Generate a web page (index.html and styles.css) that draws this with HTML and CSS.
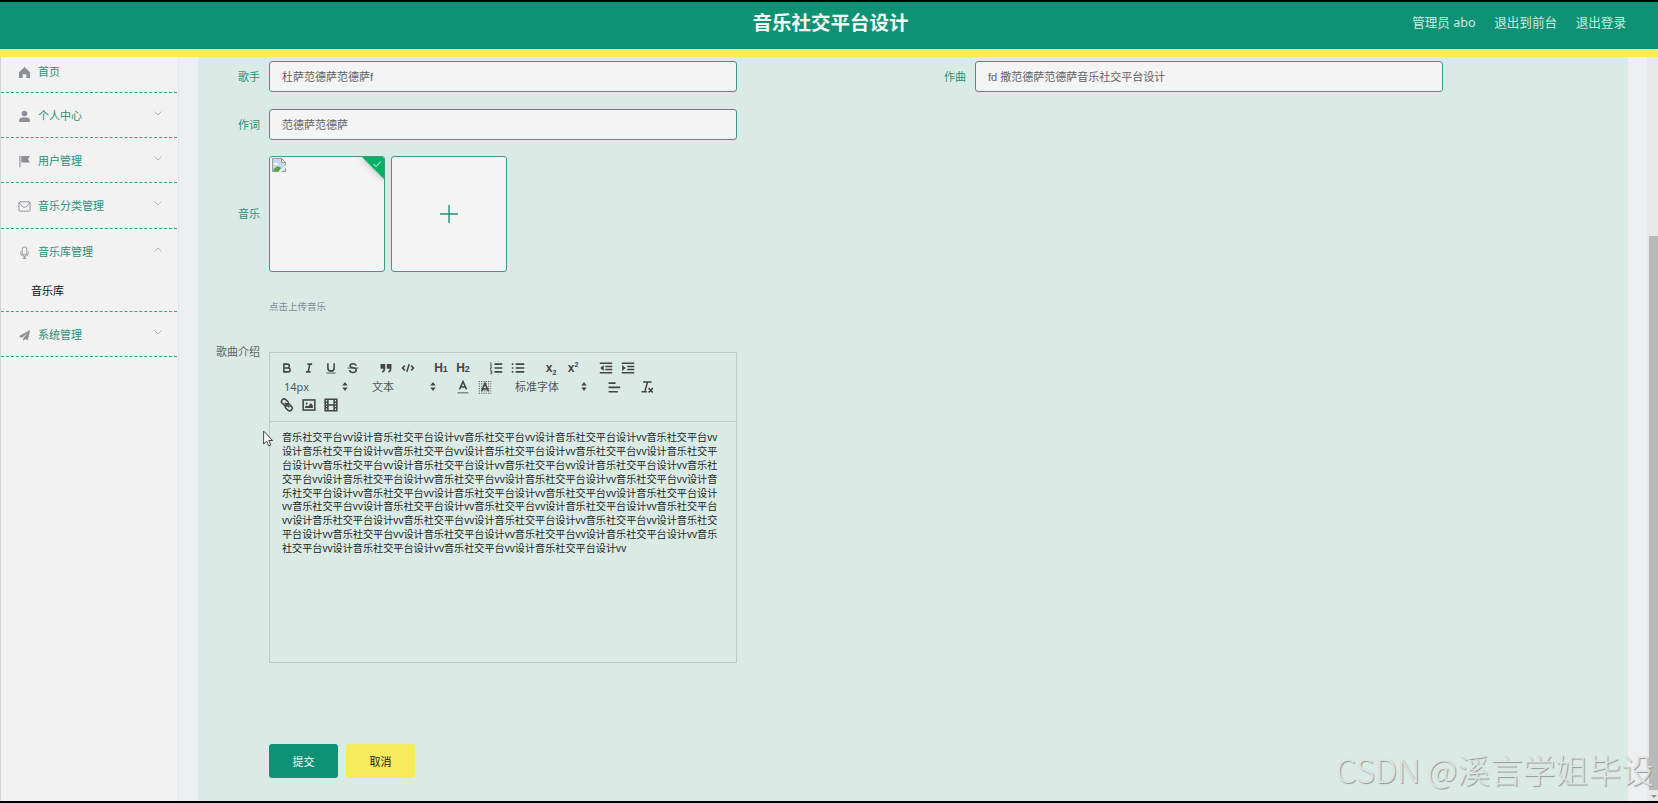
FILE: index.html
```html
<!DOCTYPE html>
<html lang="zh-CN">
<head>
    <meta charset="UTF-8">
    <meta name="viewport" content="width=device-width, initial-scale=1.0">
    <title>音乐社交平台设计</title>
    <link rel="stylesheet" href="styles.css">
</head>
<body>
    <header class="navbar">
        <h1 class="title">音乐社交平台设计</h1>
        <nav class="right-menu">
            <span>管理员 abo</span>
            <span>退出到前台</span>
            <span>退出登录</span>
        </nav>
    </header>

    <div class="container">
        <aside class="sidebar">
            <div class="menu-item first">
                <svg class="menu-icon" viewBox="0 0 14 14"><path fill="#8c9095" d="M7 1 1 6.800V13h4V8.800h4V13h4V6.800z"/></svg>
                <span>首页</span>
            </div>
            <div class="menu-item">
                <svg class="menu-icon" viewBox="0 0 14 14"><circle cx="7" cy="3.900" r="3" fill="#8c9095"/><path fill="#8c9095" d="M1.200 13v-1.600C1.200 9.400 2.600 8.200 4.500 8.200h5c1.900 0 3.300 1.200 3.300 3.200V13z"/></svg>
                <span>个人中心</span>
                <svg class="arrow" viewBox="0 0 8 5"><path d="M.5.5 4 4 7.500.5"/></svg>
            </div>
            <div class="menu-item">
                <svg class="menu-icon" viewBox="0 0 14 14"><path fill="#8c9095" d="M1.500.8h1.200v12.400H1.500zM3.500 1.200h9.300L10.800 4.700l2 3.500H3.500z"/></svg>
                <span>用户管理</span>
                <svg class="arrow" viewBox="0 0 8 5"><path d="M.5.5 4 4 7.500.5"/></svg>
            </div>
            <div class="menu-item">
                <svg class="menu-icon line" viewBox="0 0 14 14"><rect x="1" y="2" width="12" height="10" rx="1"/><path d="M1.500 2.500C3 6 5 7.800 7 7.800S11 6 12.500 2.500"/></svg>
                <span>音乐分类管理</span>
                <svg class="arrow" viewBox="0 0 8 5"><path d="M.5.5 4 4 7.500.5"/></svg>
            </div>
            <div class="menu-group">
                <div class="menu-item open">
                    <svg class="menu-icon line" viewBox="0 0 14 14"><rect x="4.500" y="1" width="5" height="8.500" rx="2.500"/><path d="M2.800 6v1.200a4.200 4 0 0 0 8.400 0V6M7 11.200v2M5 13.300h4"/></svg>
                    <span>音乐库管理</span>
                    <svg class="arrow" viewBox="0 0 8 5"><path d="M.5 4.500 4 1l3.500 3.500"/></svg>
                </div>
                <div class="sub-item">音乐库</div>
            </div>
            <div class="menu-item">
                <svg class="menu-icon" viewBox="0 0 14 14"><path fill="#8c9095" d="M13 1 .8 7.800l3.400 1.500L10.800 4 5.600 9.900V13l2-2.200 3 1.400z"/></svg>
                <span>系统管理</span>
                <svg class="arrow" viewBox="0 0 8 5"><path d="M.5.5 4 4 7.500.5"/></svg>
            </div>
        </aside>

        <main class="main">
            <div class="form-row">
                <div class="form-item">
                    <label>歌手</label>
                    <div class="input">杜萨范德萨范德萨f</div>
                </div>
                <div class="form-item">
                    <label>作曲</label>
                    <div class="input">fd 撒范德萨范德萨音乐社交平台设计</div>
                </div>
            </div>
            <div class="form-row">
                <div class="form-item">
                    <label>作词</label>
                    <div class="input">范德萨范德萨</div>
                </div>
            </div>
            <div class="form-item upload">
                <label>音乐</label>
                <div class="card">
                    <svg class="broken" viewBox="0 0 14 14"><path fill="#c6d9f3" stroke="#9a9a9a" d="M.5.5h9l4 4v9H.5z"/><path fill="#fff" stroke="#9a9a9a" d="M9.500.5v4h4z"/><path fill="#fff" d="M2 6.500a1.600 1.600 0 0 1 3-1 1.300 1.300 0 0 1 1.500 1.500H2z"/><path fill="#58a246" d="M1 13c1-3 3-4.500 5-4.500 1.500 0 2.600.8 3 1.700L6.500 13z"/><path fill="#f4f4f4" d="m14 7-7.500 7H9l5-4.500z"/></svg>
                    <div class="ribbon">
                        <svg viewBox="0 0 24 24"><path fill="#00b066" d="M0 0h24v24z"/><path fill="none" stroke="#fff" d="m12.500 8 2.500 2.500L20 5.500"/></svg>
                    </div>
                </div>
                <div class="card add">
                    <svg viewBox="0 0 18 18"><path fill="none" stroke="#1b9277" stroke-width="1.400" d="M9 0v18M0 9h18"/></svg>
                </div>
            </div>
            <p class="tip">点击上传音乐</p>
            <div class="form-item intro">
                <label class="gray">歌曲介绍</label>
                <div class="editor">
                    <div class="toolbar">
                        <div class="tool-row">
                            <div class="group">
                                <svg viewBox="0 0 18 18"><path d="M5 4h4.500a2.500 2.500 0 0 1 0 5H5zM5 9h5.500a2.500 2.500 0 0 1 0 5H5z"/></svg>
                                <svg viewBox="0 0 18 18"><path d="M7 4h6M5 14h6M8 14l2-10"/></svg>
                                <svg viewBox="0 0 18 18"><path d="M5 3v6a4 4 0 0 0 8 0V3"/><path class="thin" d="M3 15.500h12"/></svg>
                                <svg viewBox="0 0 18 18"><path class="thin" d="M2 9h14"/><path d="M13 6c-.4-1.500-2-2.500-4-2.500S5.300 4.500 5.300 6 6.500 8.300 9 8.700s4.200 1.400 4.200 3-1.700 3-4.200 3-4.200-1.200-4.500-3"/></svg>
                            </div>
                            <div class="group">
                                <svg viewBox="0 0 18 18"><path class="fill" d="M2 4h6v6c0 3-1.500 4.500-4 5v-2c1.200-.5 1.800-1.300 1.800-3H2zM10 4h6v6c0 3-1.500 4.500-4 5v-2c1.200-.5 1.800-1.300 1.800-3H10z"/></svg>
                                <svg viewBox="0 0 18 18"><path d="M5 6 2 9l3 3M13 6l3 3-3 3M10.500 4l-3 10"/></svg>
                            </div>
                            <div class="group">
                                <b>H<small>1</small></b>
                                <b>H<small>2</small></b>
                            </div>
                            <div class="group">
                                <svg viewBox="0 0 18 18"><path d="M7 4h10M7 9h10M7 14h10"/><path class="thin" d="M2.500 1.500v4M1.500 5.500h2M1.500 7.500h2L1.500 10.500h2M1.500 12.500h2v4h-2M2 14.500h1.500"/></svg>
                                <svg viewBox="0 0 18 18"><path d="M6 4h11M6 9h11M6 14h11M1 4h2M1 9h2M1 14h2"/></svg>
                            </div>
                            <div class="group">
                                <b>x<sub>2</sub></b>
                                <b>x<sup>2</sup></b>
                            </div>
                            <div class="group">
                                <svg viewBox="0 0 18 18"><path d="M1 3h16M8 7h9M8 11h9M1 15h16"/><path class="fill" d="M6 5v8L1.500 9z"/></svg>
                                <svg viewBox="0 0 18 18"><path d="M1 3h16M8 7h9M8 11h9M1 15h16"/><path class="fill" d="M1.500 5v8L6 9z"/></svg>
                            </div>
                        </div>
                        <div class="tool-row">
                            <div class="picker">14px<svg viewBox="0 0 6 10"><path class="fill" d="m3 0 3 4H0zM3 10l3-4H0z"/></svg></div>
                            <div class="picker">文本<svg viewBox="0 0 6 10"><path class="fill" d="m3 0 3 4H0zM3 10l3-4H0z"/></svg></div>
                            <div class="group">
                                <svg viewBox="0 0 18 18"><path d="m4.500 12 4.500-10 4.500 10M6 9h6"/><path class="thin" d="M2 16.500h14"/></svg>
                                <svg viewBox="0 0 18 18"><path class="dots" d="M1 2h16M1 5h16M1 8h16M1 11h16M1 14h16M1 17h16"/><path d="m4.500 14.500 4.500-10 4.500 10M6 11.500h6"/></svg>
                            </div>
                            <div class="picker wide">标准字体<svg viewBox="0 0 6 10"><path class="fill" d="m3 0 3 4H0zM3 10l3-4H0z"/></svg></div>
                            <div class="group">
                                <svg viewBox="0 0 18 18"><path d="M2 4h9M2 9.500h15M2 15h12"/></svg>
                            </div>
                            <div class="group">
                                <svg viewBox="0 0 18 18"><path d="M4 2.500h11M9.500 3l-3 11M2 15h7M11 10.500l5.500 5.500M16.500 10.500 11 16"/></svg>
                            </div>
                        </div>
                        <div class="tool-row last">
                            <div class="group">
                                <svg viewBox="0 0 18 18"><g transform="rotate(42 9 9)"><rect x="0" y="5" width="9.500" height="6.500" rx="3.200"/><rect x="8" y="6.500" width="9.500" height="6.500" rx="3.200"/><path d="M5 9h8"/></g></svg>
                                <svg viewBox="0 0 18 18"><rect x="1.500" y="2.500" width="15" height="13"/><circle class="fill" cx="6" cy="7" r="1.300"/><path class="fill" d="M4 13v-2l2-1.500L8 11l3.500-4.500L14 9.500V13z"/></svg>
                                <svg viewBox="0 0 18 18"><path d="M1.500 1.500h15v15h-15zM5 2v14M13 2v14M5 9h8M1 5.500h4M1 9h4M1 12.500h4M13 5.500h4M13 9h4M13 12.500h4"/></svg>
                            </div>
                        </div>
                    </div>
                    <div class="editor-content" id="content"></div>
                </div>
            </div>
            <div class="buttons">
                <button class="btn btn-submit">提交</button>
                <button class="btn btn-cancel">取消</button>
            </div>
        </main>

        <div class="scrollbar">
            <div class="thumb"></div>
            <div class="scroll-down"></div>
        </div>
    </div>

    <svg class="cursor" viewBox="0 0 12 18"><path fill="#fff" stroke="#333" d="M.7 1v14l3.300-3 2.300 5 2.200-1-2.200-4.800h4.200z"/></svg>
    <div class="watermark">CSDN @溪言学姐毕设</div>

    <script>
        document.getElementById('content').textContent = '音乐社交平台vv设计音乐社交平台设计vv'.repeat(21);
    </script>
</body>
</html>
```

FILE: styles.css
```css
* {
    margin: 0;
    padding: 0;
    box-sizing: border-box;
}

body {
    width: 1658px;
    height: 803px;
    background: #eeeff1;
    border-top: 2px solid #000;
    border-bottom: 2px solid #000;
    position: relative;
    overflow: hidden;
    display: flex;
    flex-direction: column;
    font-family: "Liberation Sans", "Noto Sans CJK SC", sans-serif;
    font-size: 11px;
}

.navbar {
    height: 55px;
    flex: none;
    background: #0d9373;
    border-bottom: 8px solid #f5ec5c;
    display: grid;
    grid-template-columns: 1fr auto 1fr;
    padding: 0 32px 5px;
    align-items: center;
    color: #e4f3ee;
}

.title {
    grid-column: 2;
    margin-left: 3px;
    font-size: 19.5px;
    line-height: 30px;
    color: #f3f8f6;
}

.right-menu {
    display: flex;
    justify-content: flex-end;
    gap: 18.5px;
    font-family: "Noto Sans", "Noto Sans CJK SC", sans-serif;
    font-size: 12.6px;
    line-height: 20px;
    color: #cfe9e1;
}

.container {
    flex: 1;
    display: flex;
    min-height: 0;
}

.sidebar {
    width: 179px;
    background: #f2f2f2;
    border-left: 1px solid #d4d4d4;
    border-right: 1px solid #e6e7e8;
    color: #2a9078;
}

.menu-item {
    height: 45.2px;
    margin-right: 1px;
    padding: 2px 15px 0 17px;
    display: flex;
    align-items: center;
    border-bottom: 1px dashed #3da08a;
}

.menu-item.first {
    height: 36px;
    padding-bottom: 7px;
}

.menu-item span {
    margin-left: 7px;
    line-height: 16px;
}

.menu-item.open {
    border-bottom: none;
}

.menu-group {
    height: 83.5px;
    margin-right: 1px;
    border-bottom: 1px dashed #3da08a;
}

.menu-group .menu-item {
    margin-right: 0;
}

.sub-item {
    padding-left: 30px;
    line-height: 34px;
    color: #111;
}

.menu-icon {
    width: 13px;
    height: 13px;
}

.menu-icon.line {
    fill: none;
    stroke: #8c9095;
}

.arrow {
    width: 8px;
    height: 5px;
    margin-left: auto;
    margin-bottom: 5px;
    fill: none;
    stroke: #a4a6aa;
    stroke-width: 0.8;
}

.main {
    width: 1430px;
    margin-left: 19px;
    padding: 4px 0 0 11px;
    background: #daebe6;
}

.form-row {
    display: flex;
    gap: 179px;
    margin-bottom: 17px;
}

.form-row + .upload {
    margin-top: -1px;
}

.form-item {
    display: flex;
    align-items: center;
}

.form-item label {
    width: 51px;
    margin-right: 9px;
    text-align: right;
    line-height: 18px;
    color: #2a9078;
}

.form-item label.gray {
    color: #606266;
    margin-top: -9px;
}

.input {
    width: 468px;
    height: 31px;
    padding: 0 12px;
    border: 1px solid #3d9985;
    border-radius: 3px;
    background: #f4f4f4;
    color: #606266;
    line-height: 30px;
}

.form-row .form-item + .form-item {
    margin-left: -1px;
}

.card {
    width: 116px;
    height: 116px;
    margin-right: 6px;
    position: relative;
    overflow: hidden;
    border: 1px solid #3d9985;
    border-radius: 3px;
    background: #f4f4f4;
}

.card.add {
    display: flex;
    align-items: center;
    justify-content: center;
}

.card.add svg {
    width: 18px;
    height: 18px;
}

.broken {
    width: 14px;
    height: 14px;
    margin: 1px 0 0 2px;
}

.ribbon {
    position: absolute;
    top: -1px;
    right: -1px;
    width: 24px;
    height: 24px;
    filter: drop-shadow(0 1px 3px rgba(0, 0, 0, 0.25));
}

.ribbon svg {
    display: block;
}

.tip {
    margin: 27px 0 0 60px;
    font-size: 9.5px;
    line-height: 16px;
    color: #7d899b;
}

.intro {
    margin-top: 37px;
    align-items: flex-start;
}

.editor {
    width: 468px;
    height: 311px;
    border: 1px solid #bfcac7;
}

.toolbar {
    height: 69px;
    padding: 6px 6px 0;
    border-bottom: 1px solid #bfcac7;
}

.tool-row {
    display: flex;
    gap: 11px;
    height: 18.5px;
    align-items: center;
    color: #444;
}

.group {
    display: flex;
}

.group svg {
    width: 14px;
    height: 14px;
    margin: 0 4px;
    fill: none;
    stroke: #444;
    stroke-width: 2;
}

.group .thin {
    stroke-width: 1.1;
}

.group .dots {
    stroke-width: 1.2;
    stroke-dasharray: 1.5 1.5;
}

svg .fill {
    fill: #444;
    stroke: none;
}

.group b {
    width: 22px;
    height: 14px;
    text-align: center;
    font-size: 12px;
    line-height: 14px;
}

.group small {
    font-size: 9px;
}

.group sub,
.group sup {
    font-size: 7px;
    line-height: 0;
}

.picker {
    width: 77px;
    padding: 0 5px 0 8px;
    display: flex;
    align-items: center;
    justify-content: space-between;
    line-height: 16px;
    color: #555;
    font-family: "Noto Sans", "Noto Sans CJK SC", sans-serif;
}

.picker.wide {
    width: 85px;
}

.picker svg {
    width: 6px;
    height: 9px;
}

.editor-content {
    width: 440px;
    margin-left: 12px;
    padding-top: 9px;
    font-size: 10.13px;
    line-height: 13.88px;
    color: #1c2422;
}

.buttons {
    display: flex;
    gap: 8px;
    margin: 81px 0 0 60px;
}

.btn {
    width: 69px;
    height: 34px;
    border: none;
    border-radius: 3px;
    font-family: inherit;
    font-size: 11px;
    cursor: pointer;
}

.btn-submit {
    background: #0d9373;
    color: #fff;
}

.btn-cancel {
    background: #f5ec5c;
    color: #222;
}

.scrollbar {
    width: 11px;
    margin-left: auto;
    padding: 179px 0 0 2px;
    background: #e8e8e8;
}

.thumb {
    height: 554px;
    background: #b9b9b9;
}

.scroll-down {
    margin: 5px 0 0 2px;
    width: 0;
    border: 3px solid transparent;
    border-top-color: #8a8a8a;
}

.cursor {
    position: absolute;
    left: 263px;
    top: 428px;
    width: 11px;
    height: 17px;
}

.watermark {
    position: absolute;
    right: 4px;
    bottom: 8px;
    font-family: "Noto Sans CJK SC", sans-serif;
    font-size: 32.8px;
    font-weight: 300;
    line-height: 48px;
    color: #dfe3e2;
    text-shadow: 1px 1px 1px #8f9997;
    white-space: nowrap;
}
```
